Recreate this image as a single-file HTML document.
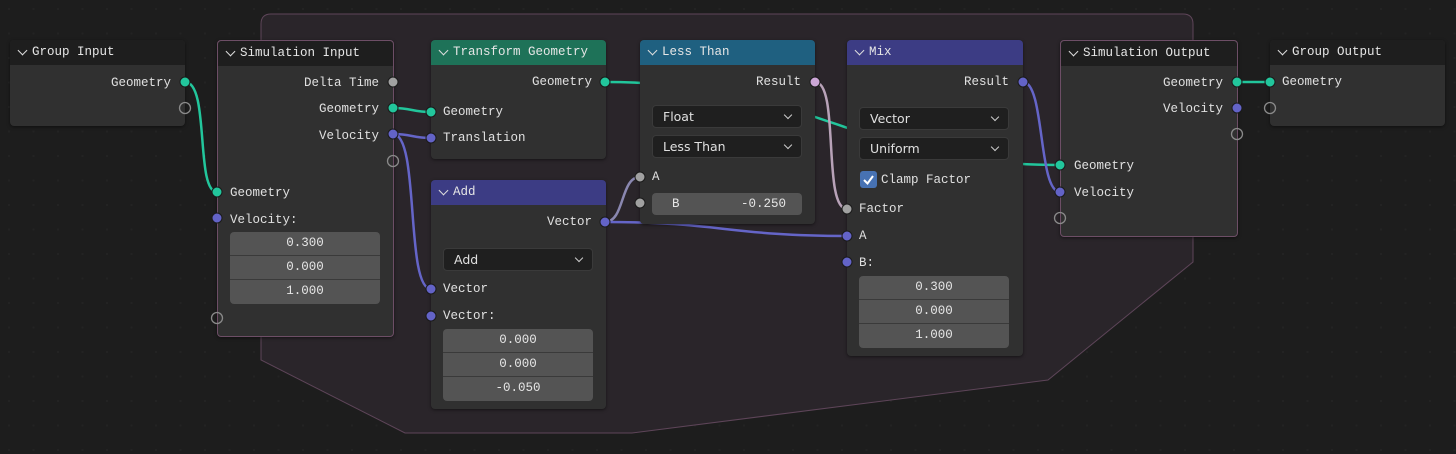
<!DOCTYPE html>
<html><head><meta charset="utf-8"><style>
*{box-sizing:border-box;margin:0;padding:0}
body{width:1456px;height:454px;overflow:hidden;background:#1d1d1d;font-family:"Liberation Mono","DejaVu Sans Mono",monospace;font-size:12.5px;color:#e0e0e0;position:relative}
.n{position:absolute;background:#303030;border-radius:4px;box-shadow:0 1px 3px rgba(0,0,0,.5)}
.n.sim{border:1px solid #6d4e66}
.h{height:25px;background:#1e1e1e;border-radius:4px 4px 0 0;padding-left:22px;line-height:24px;position:relative;color:#e6e6e6}
.h:before{content:"";position:absolute;left:9px;top:7px;width:6px;height:6px;border-right:1.3px solid #ddd;border-bottom:1.3px solid #ddd;transform:rotate(45deg)}
.t{position:absolute;white-space:nowrap;line-height:14px}
.r{text-align:right}
.dd{position:absolute;background:#1f1f1f;border:1px solid #3a3a3a;border-radius:4px;height:23px;line-height:21px;padding-left:10px;font-family:"DejaVu Sans",sans-serif;font-size:12.5px}
.dd:after{content:"";position:absolute;right:10px;top:6px;width:5px;height:5px;border-right:1.3px solid #ccc;border-bottom:1.3px solid #ccc;transform:rotate(45deg)}
.f{position:absolute;background:#545454;border-radius:4px;overflow:hidden}
.f div{height:24px;line-height:23px;text-align:center;border-bottom:1px solid #3a3a3a;color:#e6e6e6}
.f div:last-child{border-bottom:none}
svg{position:absolute;left:0;top:0}
</style></head><body>
<svg width="1456" height="454">
<defs><pattern id="d" width="24.5" height="24.5" patternUnits="userSpaceOnUse" x="8" y="8"><rect width="2" height="2" fill="#232323"/></pattern></defs>
<rect width="1456" height="454" fill="url(#d)"/>
<path d="M261,24 Q261,14 271,14 L1183,14 Q1193,14 1193,24 L1193,262 L1048,380 L632,433 L405,433 L261,360 Z" fill="#2a252a" stroke="#5e4559" stroke-width="1"/>
<g fill="none" stroke-width="2.5" stroke-linecap="round">
<path d="M185,82 C210,82 195,192 217,192" stroke="#22c69c"/>
<path d="M393,108 C412,108 412,112 431,112" stroke="#22c69c"/>
<path d="M605,82 C820,82 850,165 1060,165" stroke="#22c69c"/>
<path d="M1237,82 L1270,82" stroke="#22c69c"/>
<path d="M393,134 C412,134 412,138 431,138" stroke="#6565c8"/>
<path d="M393,134 C420,134 405,289 431,289" stroke="#6565c8"/>
<path d="M605,222 C625,222 620,177 640,177" stroke="#8a87b0"/>
<path d="M605,222 C720,222 730,236 847,236" stroke="#6565c8"/>
<path d="M815,82 C840,82 822,209 847,209" stroke="#b8a2b8"/>
<path d="M1023,82 C1045,82 1038,192 1060,192" stroke="#6565c8"/>
</g>
</svg>

<div class="n" style="left:10px;top:40px;width:175px;height:86px"><div class="h">Group Input</div><div class="t r" style="right:14px;top:36px">Geometry</div></div>

<div class="n sim" style="left:217px;top:40px;width:177px;height:297px"><div class="h">Simulation Input</div>
<div class="t r" style="right:14px;top:35px">Delta Time</div>
<div class="t r" style="right:14px;top:61px">Geometry</div>
<div class="t r" style="right:14px;top:88px">Velocity</div>
<div class="t" style="left:12px;top:145px">Geometry</div>
<div class="t" style="left:12px;top:172px">Velocity:</div>
<div class="f" style="left:12px;top:191px;width:150px;height:72px"><div>0.300</div><div>0.000</div><div>1.000</div></div>
</div>

<div class="n" style="left:431px;top:40px;width:175px;height:119px"><div class="h" style="background:#1e7258">Transform Geometry</div>
<div class="t r" style="right:14px;top:35px">Geometry</div>
<div class="t" style="left:12px;top:65px">Geometry</div>
<div class="t" style="left:12px;top:91px">Translation</div></div>

<div class="n" style="left:431px;top:180px;width:175px;height:229px"><div class="h" style="background:#3c3c84">Add</div>
<div class="t r" style="right:14px;top:35px">Vector</div>
<div class="dd" style="left:12px;top:68px;width:150px">Add</div>
<div class="t" style="left:12px;top:102px">Vector</div>
<div class="t" style="left:12px;top:129px">Vector:</div>
<div class="f" style="left:12px;top:149px;width:150px;height:72px"><div>0.000</div><div>0.000</div><div>-0.050</div></div>
</div>

<div class="n" style="left:640px;top:40px;width:175px;height:184px"><div class="h" style="background:#1f6080">Less Than</div>
<div class="t r" style="right:14px;top:35px">Result</div>
<div class="dd" style="left:12px;top:65px;width:150px">Float</div>
<div class="dd" style="left:12px;top:95px;width:150px">Less Than</div>
<div class="t" style="left:12px;top:130px">A</div>
<div class="f" style="left:12px;top:153px;width:150px;height:22px;background:#545454"><div style="text-align:left;padding-left:20px;position:relative">B<span style="position:absolute;right:16px">-0.250</span></div></div>
</div>

<div class="n" style="left:847px;top:40px;width:176px;height:316px"><div class="h" style="background:#3c3c84">Mix</div>
<div class="t r" style="right:14px;top:35px">Result</div>
<div class="dd" style="left:12px;top:67px;width:150px">Vector</div>
<div class="dd" style="left:12px;top:97px;width:150px">Uniform</div>
<div style="position:absolute;left:13px;top:131px;width:17px;height:17px;background:#4772b3;border-radius:3px"><svg width="17" height="17"><path d="M4,9 L7.5,12.5 L13,5" fill="none" stroke="#fff" stroke-width="2"/></svg></div>
<div class="t" style="left:34px;top:133px">Clamp Factor</div>
<div class="t" style="left:12px;top:162px">Factor</div>
<div class="t" style="left:12px;top:189px">A</div>
<div class="t" style="left:12px;top:216px">B:</div>
<div class="f" style="left:12px;top:236px;width:150px;height:72px"><div>0.300</div><div>0.000</div><div>1.000</div></div>
</div>

<div class="n sim" style="left:1060px;top:40px;width:178px;height:197px"><div class="h">Simulation Output</div>
<div class="t r" style="right:14px;top:35px">Geometry</div>
<div class="t r" style="right:14px;top:61px">Velocity</div>
<div class="t" style="left:13px;top:118px">Geometry</div>
<div class="t" style="left:13px;top:145px">Velocity</div></div>

<div class="n" style="left:1270px;top:40px;width:175px;height:86px"><div class="h">Group Output</div><div class="t" style="left:12px;top:35px">Geometry</div></div>

<svg width="1456" height="454" style="pointer-events:none">
<g stroke="#1a1a1a" stroke-width="1">
<g fill="#22c69c"><circle cx="185" cy="82" r="5"/><circle cx="393" cy="108" r="5"/><circle cx="217" cy="192" r="5"/><circle cx="431" cy="112" r="5"/><circle cx="605" cy="82" r="5"/><circle cx="1237" cy="82" r="5"/><circle cx="1060" cy="165" r="5"/><circle cx="1270" cy="82" r="5"/></g>
<g fill="#6363c7"><circle cx="393" cy="134" r="5"/><circle cx="217" cy="218" r="5"/><circle cx="431" cy="138" r="5"/><circle cx="605" cy="222" r="5"/><circle cx="431" cy="289" r="5"/><circle cx="431" cy="316" r="5"/><circle cx="1023" cy="82" r="5"/><circle cx="847" cy="236" r="5"/><circle cx="847" cy="262" r="5"/><circle cx="1237" cy="108" r="5"/><circle cx="1060" cy="192" r="5"/></g>
<g fill="#a1a1a1"><circle cx="393" cy="82" r="5"/><circle cx="640" cy="177" r="5"/><circle cx="640" cy="203" r="5"/><circle cx="847" cy="209" r="5"/></g>
<circle cx="815" cy="82" r="5" fill="#cca6d6"/>
</g>
<g fill="none" stroke="#8a8a8a" stroke-width="1.3"><circle cx="185" cy="108" r="5.5"/><circle cx="393" cy="161" r="5.5"/><circle cx="217" cy="318" r="5.5"/><circle cx="1237" cy="134" r="5.5"/><circle cx="1060" cy="218" r="5.5"/><circle cx="1270" cy="108" r="5.5"/></g>
</svg>
</body></html>
